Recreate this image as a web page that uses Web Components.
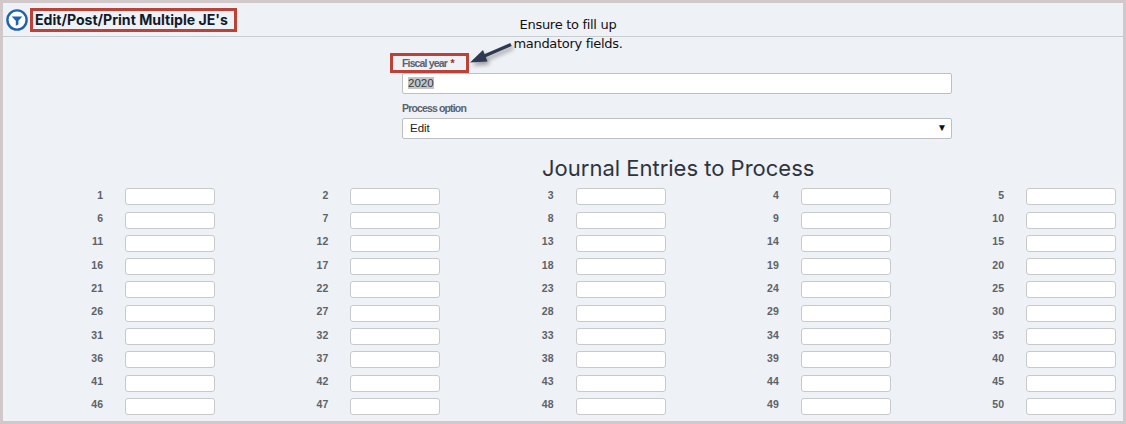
<!DOCTYPE html>
<html>
<head>
<meta charset="utf-8">
<title>Edit/Post/Print Multiple JE's</title>
<style>
  html, body { margin: 0; padding: 0; }
  body { width: 1126px; height: 424px; overflow: hidden; background: #fff; font-family: "Liberation Sans", Arial, sans-serif; }
</style>
</head>
<body>
<je-page></je-page>
<script>
class JeHeader extends HTMLElement {
  constructor() {
    super();
    this.attachShadow({ mode: 'open' }).innerHTML = `
      <style>
        :host { display: flex; align-items: center; height: 33px; border-bottom: 1px solid #c9cccc; padding-left: 3px; }
        svg { flex-shrink: 0; width: 22px; height: 22px; }
        .title { margin-left: 2px; height: 24px; box-sizing: border-box; border: 3px solid #bc4238; padding: 0 0 0 2px; display: flex; align-items: center; width: 207px;
          font: 700 14.1px Inter, sans-serif; color: #111a2a; white-space: nowrap; }
      </style>
      <svg viewBox="0 0 22 22">
        <circle cx="11" cy="11" r="9.6" fill="#fff" stroke="#1f63ad" stroke-width="2.4"/>
        <path d="M5.6 7.4h10.8l-4 4.4v3.8l-2.6 1.2v-5z" fill="#1f63ad"/>
      </svg>
      <div class="title"><slot></slot></div>`;
  }
}

class JeField extends HTMLElement {
  constructor() {
    super();
    this.attachShadow({ mode: 'open' }).innerHTML = `
      <style>
        :host { display: block; width: 550px; }
        label { display: block; font: 700 10.5px/12px "Liberation Sans", sans-serif; color: #5a6270; letter-spacing: -.85px; }
        .box { margin-top: 4px; height: 21px; box-sizing: border-box; background: #fff; border: 1px solid #bdbfc1; border-radius: 2px;
          display: flex; align-items: center; justify-content: space-between; padding: 0 5px 2px;
          font: 11.5px "Liberation Sans", sans-serif; color: #333b45; }
      </style>
      <label><slot name="label"></slot></label>
      <div class="box"><slot></slot></div>`;
  }
}

class JeEntry extends HTMLElement {
  constructor() {
    super();
    this.attachShadow({ mode: 'open' }).innerHTML = `
      <style>
        :host { display: flex; align-items: center; }
        .num { width: 100px; padding-bottom: 4px; text-align: right; font: 700 10.5px "Liberation Sans", sans-serif; color: #5d6268; }
        .input { margin-left: 22px; width: 90px; height: 17px; box-sizing: border-box; background: #fff; border: 1px solid #c8c9ca; border-radius: 3px; }
      </style>
      <span class="num"></span><span class="input"></span>`;
  }
  connectedCallback() { this.shadowRoot.querySelector('.num').textContent = this.getAttribute('num'); }
}

class JeGrid extends HTMLElement {
  constructor() {
    super();
    let items = '';
    for (let i = 1; i <= 50; i++) items += `<je-entry num="${i}"></je-entry>`;
    this.attachShadow({ mode: 'open' }).innerHTML = `
      <style>
        :host { display: grid; grid-template-columns: repeat(5, 225.25px); grid-auto-rows: 17px; row-gap: 6.3px; }
      </style>
      ${items}`;
  }
}

class JeCallout extends HTMLElement {
  constructor() {
    super();
    this.attachShadow({ mode: 'open' }).innerHTML = `
      <style>
        :host { position: absolute; left: 385px; top: 11px; width: 270px; height: 60px; display: block; }
        .note { position: absolute; left: 110px; top: 1px; width: 140px; text-align: center;
          font: 13px/19px "DejaVu Sans", sans-serif; color: #111; letter-spacing: -.3px; }
        .box { position: absolute; left: 2px; top: 39px; width: 79px; height: 20px; box-sizing: border-box; border: 3px solid #bc4238; }
        svg { position: absolute; left: 80px; top: 27px; width: 50px; height: 30px; overflow: visible; filter: drop-shadow(2px 3px 2px rgba(0,0,0,.35)); }
      </style>
      <div class="note"><slot></slot></div>
      <div class="box"></div>
      <svg viewBox="0 0 50 30">
        <path d="M43 3.5 L14 16" stroke="#2d3a52" stroke-width="3.4" fill="none"/>
        <path d="M2 21.5 L15 9 L19.5 20.5z" fill="#2d3a52"/>
      </svg>`;
  }
}

class JePage extends HTMLElement {
  constructor() {
    super();
    this.attachShadow({ mode: 'open' }).innerHTML = `
      <style>
        :host { display: block; position: relative; width: 1126px; height: 424px; box-sizing: border-box;
          background: #eef1f5; border: 3px solid #d1c9c9; }
        .form { display: flex; flex-direction: column; gap: 8px; padding: 20px 0 0 399px; }
        h2 { margin: 18px 0 0; padding-left: 539px; font: 400 22px/22px Inter, sans-serif; color: #2e3440; white-space: nowrap; }
        je-grid { margin-top: 9.3px; }
      </style>
      <je-header>Edit/Post/Print Multiple JE's</je-header>
      <div class="form">
        <je-field><span slot="label">Fiscal year <span style="color:#a8242c;margin-left:1.5px">*</span></span><span><mark style="background:#c4c4c4;color:#333b45">2020</mark></span></je-field>
        <je-field><span slot="label">Process option</span><span style="color:#222;margin-left:2px">Edit</span><span style="font-size:10px;color:#111;margin-right:-1px">▼</span></je-field>
      </div>
      <h2>Journal Entries to Process</h2>
      <je-grid></je-grid>
      <je-callout>Ensure to fill up<br>mandatory fields.</je-callout>`;
  }
}

customElements.define('je-header', JeHeader);
customElements.define('je-field', JeField);
customElements.define('je-entry', JeEntry);
customElements.define('je-grid', JeGrid);
customElements.define('je-callout', JeCallout);
customElements.define('je-page', JePage);
</script>
</body>
</html>
